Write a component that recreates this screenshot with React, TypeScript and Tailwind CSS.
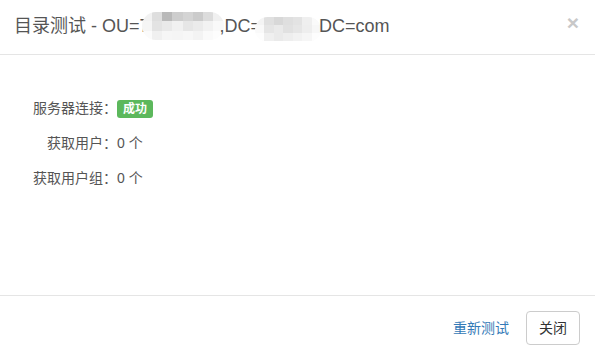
import React from 'react';

const font = { fontFamily: '"Liberation Sans", "Noto Sans CJK SC", sans-serif' };

// pixelated blur blocks covering redacted parts of the title
const blurA = [
  ['#f2f2f2', '#dedede', '#b9b9b9', '#cdcdcd', '#d4d4d4', '#cbcbcb', '#dcdcdc', '#f0f0f0'],
  ['#f5f5f5', '#e3e3e3', '#e9e9e9', '#f1f1f1', '#e6e6e6', '#ebebeb', '#f2f2f2', '#f9f9f9'],
  ['#fbfbfb', '#f0f0f0', '#f6f6f6', '#f5f5f5', '#f7f7f7', '#f3f3f3', '#fafafa', '#fdfdfd'],
];
const blurB = [
  ['#f4f4f4', '#e0e0e0', '#d8d8d8', '#dfdfdf', '#e3e3e3', '#efefef', '#fafafa'],
  ['#f9f9f9', '#e5e5e5', '#eaeaea', '#e1e1e1', '#e6e6e6', '#eeeeee', '#f7f7f7'],
  ['#fdfdfd', '#efefef', '#eaeaea', '#eeeeee', '#f2f2f2', '#f6f6f6', '#fdfdfd'],
];

const Mosaic: React.FC<{ cells: string[][]; className: string }> = ({ cells, className }) => (
  <span className={`inline-flex flex-col overflow-hidden rounded-full align-middle ${className}`}>
    {cells.map((row, i) => (
      <span key={i} className="flex flex-1">
        {row.map((c, j) => (
          <span key={j} className="flex-1" style={{ backgroundColor: c }} />
        ))}
      </span>
    ))}
  </span>
);

const rows = [
  { label: '服务器连接：', value: null },
  { label: '获取用户：', value: '0 个' },
  { label: '获取用户组：', value: '0 个' },
];

const App: React.FC = () => {
  return (
    <div className="w-[595px] h-[360px] bg-white flex flex-col overflow-hidden" style={font}>
      {/* Header */}
      <div className="h-[55px] shrink-0 flex items-center justify-between border-b border-[#e5e5e5] pl-[14px] pr-[16px]">
        <h4 className="text-[18px] leading-[26px] text-[#555] whitespace-nowrap">
          目录测试 - OU=7
          <Mosaic cells={blurA} className="w-[82px] h-[28px] -ml-[8px] -mr-[4px] -mt-[2px]" />
          ,DC=
          <Mosaic cells={blurB} className="w-[66px] h-[25px] -ml-[6px] -mr-[2px] mt-[4px]" />
          DC=com
        </h4>
        <button className="text-[21px] font-bold leading-none text-[#c8c8c8] -mt-[10px]">×</button>
      </div>

      {/* Body */}
      <div className="flex-1 pt-[36px]">
        {rows.map((r) => (
          <div key={r.label} className="h-[35px] flex items-center text-[14px] text-[#555]">
            <div className="w-[117px] text-right">{r.label}</div>
            {r.value === null ? (
              <span className="inline-flex items-center h-[18px] px-[6px] rounded-[3px] bg-[#5cb85c] text-white text-[12px] font-bold leading-none">
                成功
              </span>
            ) : (
              <span>{r.value}</span>
            )}
          </div>
        ))}
      </div>

      {/* Footer */}
      <div className="h-[65px] shrink-0 border-t border-[#e5e5e5] flex items-center justify-end gap-[17px] pr-[15px]">
        <a className="text-[14px] text-[#337ab7]">重新测试</a>
        <button className="h-[34px] px-[12px] border border-[#ccc] rounded-[4px] bg-white text-[14px] text-[#333]">
          关闭
        </button>
      </div>
    </div>
  );
};

export default App;
